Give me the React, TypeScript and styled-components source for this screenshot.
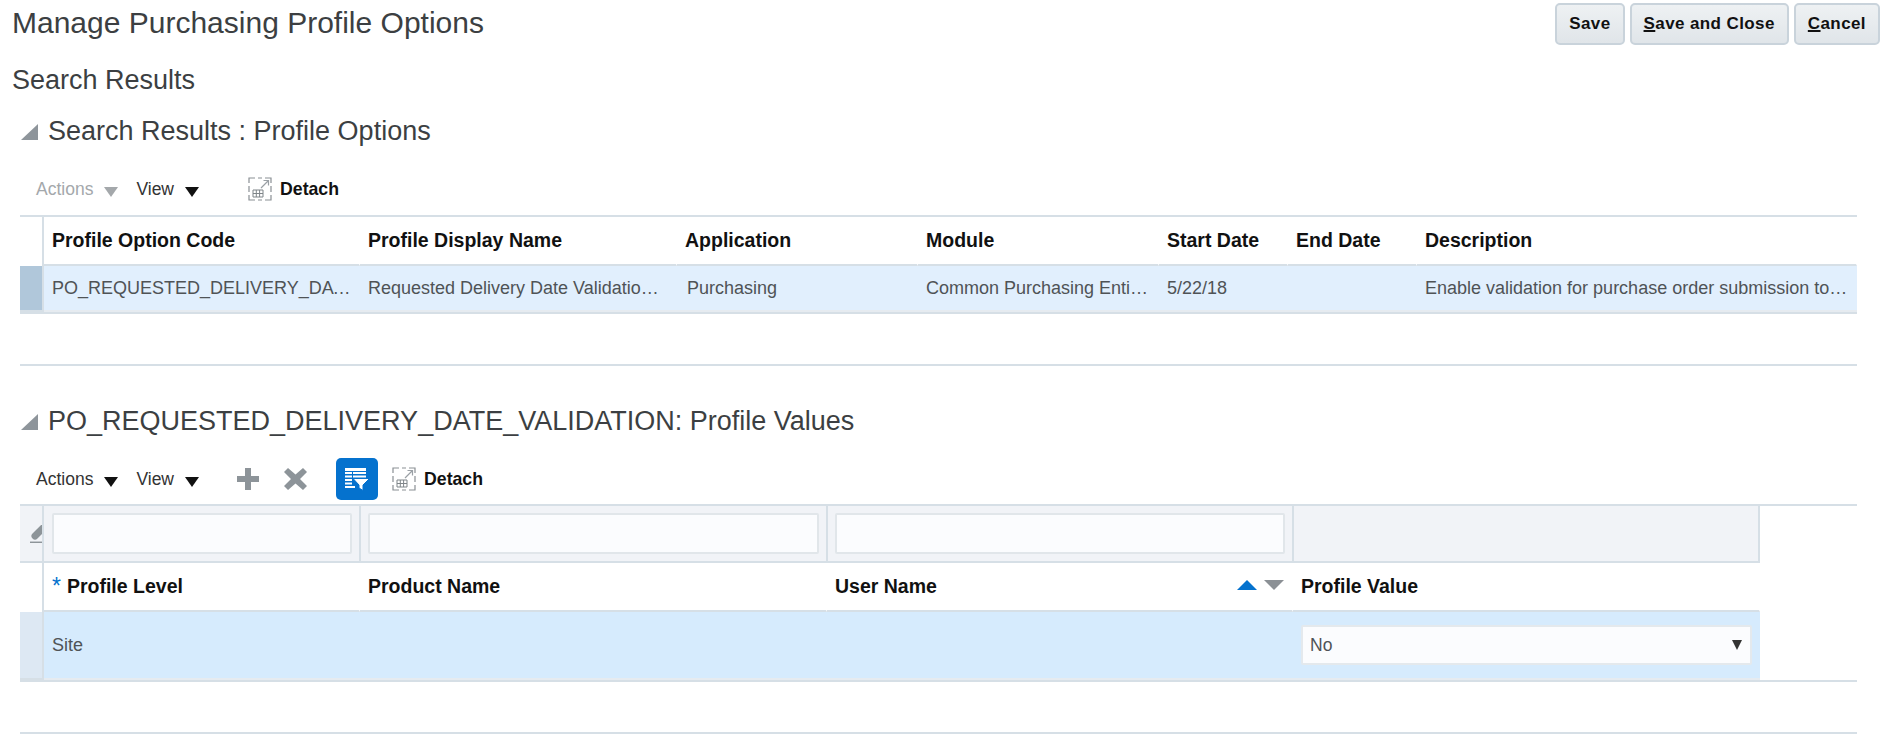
import * as React from 'react';
import styled, { createGlobalStyle } from 'styled-components';

const LINE = '#d6dfe6';

const GlobalStyle = createGlobalStyle`
    html, body {
        margin: 0;
        padding: 0;
        background: #fff;
        font-family: "Liberation Sans", Arial, sans-serif;
        color: #333;
    }
`;

const Page = styled.div`
    width: 1886px;
    height: 750px;
    overflow: hidden;
`;

const PageHeader = styled.header`
    display: flex;
    justify-content: space-between;
    height: 45px;
    padding: 3px 6px 0 12px;
`;

const Title = styled.h1`
    margin: 0;
    height: 40px;
    line-height: 40px;
    font-size: 30px;
    font-weight: normal;
    color: #3c3f42;
`;

const Buttons = styled.div`
    display: flex;
    gap: 5px;
`;

const Button = styled.button`
    height: 42px;
    padding: 0 12px;
    border: 2px solid #c9d3db;
    border-radius: 5px;
    background: linear-gradient(#eef1f3, #e0e5e9);
    font-family: inherit;
    font-size: 17px;
    font-weight: bold;
    letter-spacing: 0.4px;
    color: #111;

    u {
        text-decoration-thickness: 2px;
    }
`;

const SubTitle = styled.h2`
    margin: 17px 0 0 12px;
    height: 30px;
    line-height: 30px;
    font-size: 27px;
    font-weight: normal;
    color: #3c3f42;
`;

const Section = styled.section`
    padding: 0 29px 0 20px;
`;

const SectionHead = styled.div<{ $top: number }>`
    display: flex;
    align-items: center;
    gap: 10px;
    height: 32px;
    margin-top: ${p => p.$top}px;
    padding-left: 1px;

    svg {
        flex: none;
        margin-top: 2px;
    }
`;

const SectionTitle = styled.h3`
    margin: 0;
    font-size: 27px;
    font-weight: normal;
    color: #3c3f42;
`;

const Toolbar = styled.div<{ $bottom: number }>`
    display: flex;
    align-items: center;
    height: 42px;
    margin: 21px 0 ${p => p.$bottom}px;
    padding-left: 16px;
`;

const Menu = styled.span<{ $disabled?: boolean }>`
    display: inline-flex;
    align-items: center;
    gap: 11px;
    margin-right: 18px;
    padding-top: 1px;
    font-size: 17.5px;
    color: ${p => (p.$disabled ? '#a4a8ab' : '#333')};
`;

const Caret = styled.i<{ $disabled?: boolean }>`
    display: block;
    width: 0;
    height: 0;
    margin-top: 5px;
    border-left: 7px solid transparent;
    border-right: 7px solid transparent;
    border-top: 10px solid ${p => (p.$disabled ? '#a4a8ab' : '#111')};
`;

const ToolIcon = styled.span<{ $left: number }>`
    display: inline-flex;
    margin-left: ${p => p.$left}px;
`;

const ToggleButton = styled.span`
    display: flex;
    align-items: center;
    justify-content: center;
    width: 42px;
    height: 42px;
    margin-left: 29px;
    border-radius: 5px;
    background: #0572ce;
`;

const DetachLabel = styled.span`
    margin-left: 8px;
    padding-top: 1px;
    font-size: 17.7px;
    font-weight: bold;
    color: #111;
`;

const Table = styled.div`
    border-top: 2px solid ${LINE};
    border-bottom: 2px solid ${LINE};
`;

const Row = styled.div<{ $columns: string }>`
    display: grid;
    grid-template-columns: ${p => p.$columns};
`;

const gutterFills = {
    plain: '#fff',
    selected: '#b0c7da',
    soft: '#dde8f3',
    filter: '#f1f3f7',
};

const Gutter = styled.div<{ $tone?: keyof typeof gutterFills }>`
    position: relative;
    overflow: hidden;
    box-sizing: border-box;
    border-right: 2px solid ${LINE};
    border-bottom: ${p => (p.$tone === 'selected' || p.$tone === 'soft' ? `2px solid ${LINE}` : '0')};
    background: ${p => gutterFills[p.$tone ?? 'plain']};
`;

const HeaderCell = styled.div`
    display: flex;
    align-items: center;
    height: 49px;
    box-sizing: border-box;
    min-width: 0;
    padding: 0 8px;
    border-bottom: 2px solid ${LINE};
    border-right: 1px solid #fff;
    font-size: 19.500px;
    font-weight: bold;
    color: #111;
`;

const DataCell = styled.div<{ $height: number; $fill: string; $inset?: number; $trail?: number }>`
    display: flex;
    align-items: center;
    height: ${p => p.$height}px;
    box-sizing: border-box;
    min-width: 0;
    padding: 0 ${p => p.$trail ?? 8}px 0 ${p => p.$inset ?? 8}px;
    border-bottom: 2px solid #e6ebf0;
    background: ${p => p.$fill};
    font-size: 18px;
    color: #4f5356;
`;

const Ellipsis = styled.span`
    overflow: hidden;
    text-overflow: ellipsis;
    white-space: nowrap;
`;

const Required = styled.span`
    align-self: flex-start;
    margin: 12px 6px 0 0;
    font-size: 23px;
    line-height: 1;
    font-weight: normal;
    color: #0572ce;
`;

const SortCell = styled(HeaderCell)`
    justify-content: space-between;
`;

const SortArrows = styled.span`
    display: inline-flex;
    gap: 7px;
    margin-top: -4px;
`;

const SortArrow = styled.i<{ $up?: boolean }>`
    display: block;
    width: 0;
    height: 0;
    border-left: 10px solid transparent;
    border-right: 10px solid transparent;
    ${p => (p.$up ? 'border-bottom: 10px solid #0572ce;' : 'border-top: 10px solid #8b9095;')}
`;

const FilterRow = styled(Row)`
    width: 1740px;
    height: 55px;
    border-bottom: 2px solid ${LINE};
    background: #f1f3f7;
`;

const FilterCell = styled.div`
    display: flex;
    align-items: center;
    min-width: 0;
    margin-right: -1px;
    padding: 0 7px 0 8px;
    border-right: 2px solid ${LINE};

    &:last-child {
        margin-right: 0;
    }
`;

const FilterInput = styled.input`
    width: 100%;
    height: 41px;
    box-sizing: border-box;
    border: 2px solid #e1e6ea;
    border-radius: 2px;
    background: #fbfcfe;
`;

const Select = styled.div`
    display: flex;
    align-items: center;
    justify-content: space-between;
    width: 100%;
    height: 40px;
    box-sizing: border-box;
    padding: 0 8px 0 7px;
    border: 2px solid #e4e9ed;
    border-radius: 2px;
    background: #fbfcfe;
    font-size: 17.500px;
    color: #4f5356;
`;

const SelectArrow = styled.i`
    display: block;
    width: 0;
    height: 0;
    border-left: 5px solid transparent;
    border-right: 5px solid transparent;
    border-top: 10px solid #333;
`;

const Eraser = styled.svg`
    position: absolute;
    left: 10px;
    top: 19px;
`;

const Separator = styled.hr<{ $top: number }>`
    height: 2px;
    margin: ${p => p.$top}px 0 0;
    border: 0;
    background: ${LINE};
`;

const DisclosureIcon = () => (
    <svg width="17" height="16" viewBox="0 0 17 16">
        <polygon points="17,0 17,16 0,16" fill="#8e959b" />
    </svg>
);

const DetachIcon = () => (
    <svg width="24" height="24" viewBox="0 0 24 24" fill="none">
        <path d="M1 6V1h6M10 1h4M17 1h6v5M23 9v6M23 18v5h-6M14 23h-4M7 23H1v-5M1 15V9" stroke="#8a8f94" strokeWidth="1.200" />
        <path d="M13 11l7-7M15.500 3.500h5v5" stroke="#9aa0a5" strokeWidth="1.200" />
        <path d="M5 13h10v7H5zM5 16.500h10M8.300 13v7M11.600 13v7" stroke="#7f8589" strokeWidth="1" />
    </svg>
);

const columnsOne = '24px 316px 317px 241px 241px 129px 129px 440px';
const columnsTwo = '24px 316px 467px 466px 467px';

const App = () => (
    <Page>
        <GlobalStyle />
        <PageHeader>
            <Title>Manage Purchasing Profile Options</Title>
            <Buttons>
                <Button>Save</Button>
                <Button><u>S</u>ave and Close</Button>
                <Button><u>C</u>ancel</Button>
            </Buttons>
        </PageHeader>
        <SubTitle>Search Results</SubTitle>

        <Section>
            <SectionHead $top={20}>
                <DisclosureIcon />
                <SectionTitle>Search Results : Profile Options</SectionTitle>
            </SectionHead>
            <Toolbar $bottom={5}>
                <Menu $disabled>Actions <Caret $disabled /></Menu>
                <Menu>View <Caret /></Menu>
                <ToolIcon $left={31}><DetachIcon /></ToolIcon>
                <DetachLabel>Detach</DetachLabel>
            </Toolbar>
            <Table>
                <Row $columns={columnsOne}>
                    <Gutter />
                    <HeaderCell>Profile Option Code</HeaderCell>
                    <HeaderCell>Profile Display Name</HeaderCell>
                    <HeaderCell>Application</HeaderCell>
                    <HeaderCell>Module</HeaderCell>
                    <HeaderCell>Start Date</HeaderCell>
                    <HeaderCell>End Date</HeaderCell>
                    <HeaderCell>Description</HeaderCell>
                </Row>
                <Row $columns={columnsOne}>
                    <Gutter $tone="selected" />
                    <DataCell $height={46} $fill="#e1effd"><Ellipsis>PO_REQUESTED_DELIVERY_DATE_VALIDATION</Ellipsis></DataCell>
                    <DataCell $height={46} $fill="#e1effd" $trail={17}><Ellipsis>Requested Delivery Date Validation Enabled</Ellipsis></DataCell>
                    <DataCell $height={46} $fill="#e1effd" $inset={10}><Ellipsis>Purchasing</Ellipsis></DataCell>
                    <DataCell $height={46} $fill="#e1effd"><Ellipsis>Common Purchasing Entities</Ellipsis></DataCell>
                    <DataCell $height={46} $fill="#e1effd"><Ellipsis>5/22/18</Ellipsis></DataCell>
                    <DataCell $height={46} $fill="#e1effd" />
                    <DataCell $height={46} $fill="#e1effd"><Ellipsis>Enable validation for purchase order submission to check dates</Ellipsis></DataCell>
                </Row>
            </Table>
            <Separator $top={50} />

            <SectionHead $top={39}>
                <DisclosureIcon />
                <SectionTitle>PO_REQUESTED_DELIVERY_DATE_VALIDATION: Profile Values</SectionTitle>
            </SectionHead>
            <Toolbar $bottom={4}>
                <Menu>Actions <Caret /></Menu>
                <Menu>View <Caret /></Menu>
                <ToolIcon $left={20}>
                    <svg width="22" height="22" viewBox="0 0 22 22">
                        <path d="M8 0h6v8h8v6h-8v8H8v-8H0V8h8z" fill="#8d9499" />
                    </svg>
                </ToolIcon>
                <ToolIcon $left={25}>
                    <svg width="23" height="22" viewBox="0 0 23 22">
                        <path d="M4 0l7.500 6.500L19 0l4 4-7 7 7 7-4 4-7.500-6.500L4 22l-4-4 7-7-7-7z" fill="#8d9499" />
                    </svg>
                </ToolIcon>
                <ToggleButton>
                    <svg width="25" height="23" viewBox="0 0 25 23">
                        <path d="M0 0h21v3H0zM0 4h7v2H0zM8 4h13v2H8zM0 7.500h7v2H0zM8 7.500h13v2H8zM0 11h7v2H0zM0 14.500h7v2H0zM0 18h10v2H0z" fill="#fff" />
                        <path d="M8 10.500h16.500l-6.500 6.500v5.500l-4-2.500v-3z" fill="#fff" stroke="#0572ce" strokeWidth="1" />
                    </svg>
                </ToggleButton>
                <ToolIcon $left={14}><DetachIcon /></ToolIcon>
                <DetachLabel>Detach</DetachLabel>
            </Toolbar>
            <Table>
                <FilterRow $columns={columnsTwo}>
                    <Gutter $tone="filter">
                        <Eraser width="14" height="18" viewBox="0 0 14 18">
                            <path d="M5 11l9-9" stroke="#8d9499" strokeWidth="7" strokeLinecap="round" />
                            <path d="M0 17.300h14" stroke="#8d9499" strokeWidth="1.500" />
                        </Eraser>
                    </Gutter>
                    <FilterCell><FilterInput /></FilterCell>
                    <FilterCell><FilterInput /></FilterCell>
                    <FilterCell><FilterInput /></FilterCell>
                    <FilterCell />
                </FilterRow>
                <Row $columns={columnsTwo}>
                    <Gutter />
                    <HeaderCell><Required>*</Required>Profile Level</HeaderCell>
                    <HeaderCell>Product Name</HeaderCell>
                    <SortCell>
                        User Name
                        <SortArrows><SortArrow $up /><SortArrow /></SortArrows>
                    </SortCell>
                    <HeaderCell>Profile Value</HeaderCell>
                </Row>
                <Row $columns={columnsTwo}>
                    <Gutter $tone="soft" />
                    <DataCell $height={68} $fill="#d6ebfd">Site</DataCell>
                    <DataCell $height={68} $fill="#d6ebfd" />
                    <DataCell $height={68} $fill="#d6ebfd" />
                    <DataCell $height={68} $fill="#d6ebfd">
                        <Select>No <SelectArrow /></Select>
                    </DataCell>
                </Row>
            </Table>
            <Separator $top={50} />
        </Section>
    </Page>
);

export default App;
